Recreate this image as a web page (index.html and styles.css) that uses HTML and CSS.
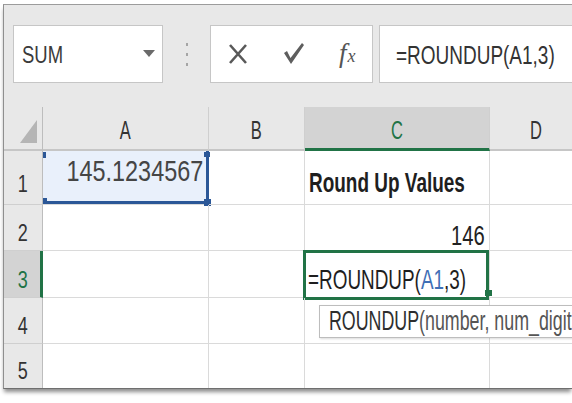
FILE: index.html
```html
<!DOCTYPE html>
<html lang="en">
<head>
<meta charset="utf-8">
<title>ROUNDUP</title>
<link rel="stylesheet" href="styles.css">
</head>
<body>
<div class="frame">
  <div class="toolbar">
    <div class="namebox"><span class="t t-sum">SUM</span><span class="caret"></span></div>
    <div class="grip"><i></i><i></i><i></i></div>
    <div class="fxbox">
      <svg class="ic-x" width="20" height="24" viewBox="0 0 20 24"><path d="M2 3 L18 21 M18 3 L2 21" stroke="#595959" stroke-width="2.6" fill="none"/></svg>
      <svg class="ic-check" width="22" height="24" viewBox="0 0 22 24"><polygon points="1,11 4,9 7.5,16 19,1 21,3 8,22" fill="#5e5e5e"/></svg>
      <span class="fx"><span class="fx-f">f</span><span class="fx-x">x</span></span>
    </div>
    <div class="formula"><span class="t t-formula">=ROUNDUP(A1,3)</span></div>
  </div>
  <div class="sheet">
    <div class="corner"><svg width="17" height="23" viewBox="0 0 17 23"><polygon points="0,23 17,23 17,0" fill="#b5b5b5"/></svg></div>
    <div class="colh"><span class="t t-col">A</span></div>
    <div class="colh"><span class="t t-col">B</span></div>
    <div class="colh colh-sel"><span class="t t-col">C</span></div>
    <div class="colh"><span class="t t-col">D</span></div>

    <div class="rowh rowh-1"><span class="t t-row">1</span></div>
    <div class="cell cell-a1"><span class="t t-a1">145.1234567</span>
      <span class="ref"><i class="h h-tl"></i><i class="h h-tr"></i><i class="h h-bl"></i><i class="h h-br"></i></span>
    </div>
    <div class="cell"></div>
    <div class="cell cell-c1"><span class="t t-c1">Round Up Values</span></div>
    <div class="cell"></div>

    <div class="rowh"><span class="t t-row">2</span></div>
    <div class="cell"></div>
    <div class="cell"></div>
    <div class="cell cell-c2"><span class="t t-146">146</span></div>
    <div class="cell"></div>

    <div class="rowh rowh-sel"><span class="t t-row">3</span></div>
    <div class="cell"></div>
    <div class="cell"></div>
    <div class="cell cell-c3"><span class="t t-c3">=ROUNDUP(<span class="refc">A1</span>,3)</span>
      <span class="active"><i class="fill"></i></span>
    </div>
    <div class="cell"></div>

    <div class="rowh"><span class="t t-row">4</span></div>
    <div class="cell"></div>
    <div class="cell"></div>
    <div class="cell cell-c4">
      <div class="tip"><span class="t t-tip"><span class="tip-fn">ROUNDUP</span>(number, num_digits)</span></div>
    </div>
    <div class="cell"></div>

    <div class="rowh rowh-last"><span class="t t-row">5</span></div>
    <div class="cell last"></div>
    <div class="cell last"></div>
    <div class="cell last"></div>
    <div class="cell last"></div>
  </div>
</div>
</body>
</html>
```

FILE: styles.css
```css
* { box-sizing: border-box; }
html, body { margin: 0; padding: 0; background: #ffffff; }
body {
  width: 572px;
  height: 403px;
  overflow: hidden;
  font-family: "Liberation Sans", Arial, sans-serif;
  color: #333;
}

.frame {
  margin: 4px 0 0 3px;
  width: 569px;
  height: 385px;
  background: #e8e8e8;
  border-top: 1px solid #9c9c9c;
  border-left: 1px solid #8f8f8f;
  border-bottom: 1px solid #6f6f6f;
  box-shadow: 0 4px 4px -1px rgba(0, 0, 0, 0.45);
  overflow: hidden;
}

/* generic squeezed text */
.t {
  display: inline-block;
  white-space: nowrap;
  line-height: 1;
  transform: scaleX(var(--sx, 1));
  transform-origin: left center;
}

/* ---------- toolbar ---------- */
.toolbar {
  height: 102px;
  display: flex;
  align-items: flex-start;
  padding: 20px 0 0 9px;
}
.namebox {
  width: 150px;
  height: 58px;
  flex: none;
  background: #fff;
  border: 1px solid #c6c6c6;
  display: flex;
  align-items: center;
  padding-left: 8px;
  padding-top: 2px;
}
.t-sum { font-size: 24px; --sx: 0.77; color: #3b3b3b; }
.caret {
  margin-left: auto;
  margin-right: 7px;
  margin-top: -4px;
  width: 0;
  height: 0;
  border-left: 6px solid transparent;
  border-right: 6px solid transparent;
  border-top: 7px solid #6a6a6a;
}
.grip {
  width: 47px;
  height: 58px;
  flex: none;
  display: flex;
  flex-direction: column;
  align-items: center;
  justify-content: center;
  gap: 7px;
}
.grip i { display: block; width: 2px; height: 3px; background: #a5a5a5; }

.fxbox {
  width: 163px;
  height: 58px;
  flex: none;
  background: #fff;
  border: 1px solid #c6c6c6;
  display: flex;
  align-items: center;
}
.ic-x { margin-left: 17px; flex: none; }
.ic-check { margin-left: 35px; flex: none; }
.fx {
  margin-left: 34px;
  font-family: "Liberation Serif", "Times New Roman", serif;
  font-style: italic;
  color: #555;
  display: inline-flex;
  align-items: baseline;
  margin-top: -2px;
}
.fx-f { font-size: 27px; }
.fx-x { font-size: 18px; margin-left: 1px; }

.formula {
  flex: 1;
  height: 58px;
  margin-left: 6px;
  background: #fff;
  border: 1px solid #c6c6c6;
  border-right: none;
  display: flex;
  align-items: center;
  padding-left: 16px;
  padding-top: 1px;
}
.t-formula { font-size: 26px; --sx: 0.73; color: #333; }

/* ---------- sheet ---------- */
.sheet {
  display: grid;
  grid-template-columns: 39px 166px 96px 185px 94px;
  grid-template-rows: 44px 54px 46px 47px 46px 44px;
  background: #fff;
}
.corner {
  background: #e8e8e8;
  border-right: 1px solid #bdbdbd;
  border-bottom: 2px solid #c6c6c6;
  display: flex;
  justify-content: flex-end;
  align-items: flex-end;
  padding: 0 5px 6px 0;
}
.colh {
  background: #e8e8e8;
  border-right: 1px solid #cfcfcf;
  border-bottom: 2px solid #c6c6c6;
  display: flex;
  justify-content: center;
  align-items: flex-start;
  padding-top: 11px;
}
.colh-sel {
  background: #d3d3d3;
  border-bottom: 3px solid #217346;
  color: #217346;
}
.t-col { font-size: 25px; --sx: 0.66; transform-origin: center; }

.rowh {
  background: #e8e8e8;
  border-right: 1px solid #bdbdbd;
  border-bottom: 1px solid #cfcfcf;
  display: flex;
  justify-content: center;
  align-items: flex-end;
  padding-bottom: 5px;
}
.rowh-1 { padding-bottom: 8px; }
.rowh-sel {
  background: #d3d3d3;
  border-right: 3px solid #217346;
  color: #217346;
  padding-left: 2px;
}
.rowh-last { border-bottom: none; }
.t-row { font-size: 24px; --sx: 0.75; transform-origin: center; }

.cell {
  position: relative;
  border-right: 1px solid #dadada;
  border-bottom: 1px solid #dadada;
  display: flex;
  color: #2a2a2a;
}
.cell.last { border-bottom: none; }

.cell-a1 {
  background: #e9f0fb;
  justify-content: flex-end;
  align-items: flex-start;
  padding: 5px 5px 0 0;
}
.t-a1 { font-size: 30px; --sx: 0.78; transform-origin: right center; color: #454545; }
.ref {
  position: absolute;
  left: 0;
  top: 0;
  right: -1px;
  bottom: 0;
  border-right: 3px solid #2b5797;
  border-bottom: 3px solid #2b5797;
}
.h { position: absolute; display: block; background: #2b5797; }
.h-tl { left: 0; top: 1px; width: 3px; height: 6px; }
.h-tr { right: -4px; top: 1px; width: 6px; height: 5px; }
.h-bl { left: 0; bottom: -3px; width: 4px; height: 6px; }
.h-br { right: -5px; bottom: -5px; width: 7px; height: 7px; }

.cell-c1 { padding: 18px 0 0 4px; align-items: flex-start; }
.t-c1 { font-size: 28px; font-weight: bold; --sx: 0.677; color: #1e1e1e; }

.cell-c2 { justify-content: flex-end; align-items: flex-start; padding: 17px 4px 0 0; }
.t-146 { font-size: 28px; --sx: 0.72; transform-origin: right center; color: #222; }

.cell-c3 { padding: 15px 0 0 3px; align-items: flex-start; }
.t-c3 { font-size: 28px; --sx: 0.675; color: #1e1e1e; }
.refc { color: #3f6fb6; }
.active {
  position: absolute;
  left: -2px;
  top: -1px;
  right: 0;
  bottom: -3px;
  border: 3px solid #217346;
}
.fill {
  position: absolute;
  display: block;
  right: -6px;
  bottom: 1px;
  width: 7px;
  height: 6px;
  background: #217346;
}

.tip {
  position: absolute;
  left: 14px;
  top: 7px;
  width: 300px;
  height: 33px;
  background: #fff;
  border: 1px solid #bdbdbd;
  box-shadow: 1px 1px 2px rgba(0, 0, 0, 0.15);
  padding: 2px 0 0 9px;
  z-index: 2;
}
.t-tip { font-size: 27px; --sx: 0.66; color: #555; }
.tip-fn { color: #2e2e2e; }
```
